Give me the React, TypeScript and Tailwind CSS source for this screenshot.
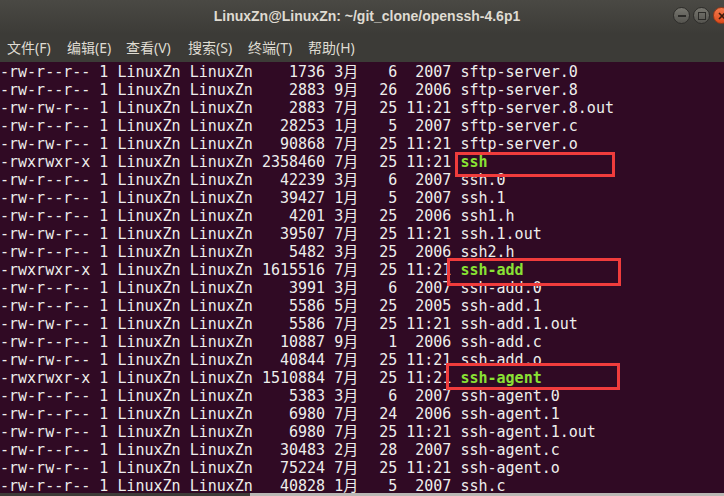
import React from "react";

type Row = [string, string, string, string, string, string, boolean?];

const rows: Row[] = [
  ["-rw-r--r--", "1736", "3月", "6", "2007", "sftp-server.0"],
  ["-rw-r--r--", "2883", "9月", "26", "2006", "sftp-server.8"],
  ["-rw-rw-r--", "2883", "7月", "25", "11:21", "sftp-server.8.out"],
  ["-rw-r--r--", "28253", "1月", "5", "2007", "sftp-server.c"],
  ["-rw-rw-r--", "90868", "7月", "25", "11:21", "sftp-server.o"],
  ["-rwxrwxr-x", "2358460", "7月", "25", "11:21", "ssh", true],
  ["-rw-r--r--", "42239", "3月", "6", "2007", "ssh.0"],
  ["-rw-r--r--", "39427", "1月", "5", "2007", "ssh.1"],
  ["-rw-r--r--", "4201", "3月", "25", "2006", "ssh1.h"],
  ["-rw-rw-r--", "39507", "7月", "25", "11:21", "ssh.1.out"],
  ["-rw-r--r--", "5482", "3月", "25", "2006", "ssh2.h"],
  ["-rwxrwxr-x", "1615516", "7月", "25", "11:21", "ssh-add", true],
  ["-rw-r--r--", "3991", "3月", "6", "2007", "ssh-add.0"],
  ["-rw-r--r--", "5586", "5月", "25", "2005", "ssh-add.1"],
  ["-rw-rw-r--", "5586", "7月", "25", "11:21", "ssh-add.1.out"],
  ["-rw-r--r--", "10887", "9月", "1", "2006", "ssh-add.c"],
  ["-rw-rw-r--", "40844", "7月", "25", "11:21", "ssh-add.o"],
  ["-rwxrwxr-x", "1510884", "7月", "25", "11:21", "ssh-agent", true],
  ["-rw-r--r--", "5383", "3月", "6", "2007", "ssh-agent.0"],
  ["-rw-r--r--", "6980", "7月", "24", "2006", "ssh-agent.1"],
  ["-rw-rw-r--", "6980", "7月", "25", "11:21", "ssh-agent.1.out"],
  ["-rw-r--r--", "30483", "2月", "28", "2007", "ssh-agent.c"],
  ["-rw-rw-r--", "75224", "7月", "25", "11:21", "ssh-agent.o"],
  ["-rw-r--r--", "40828", "1月", "5", "2007", "ssh.c"],
];

const menus: [string, string][] = [
  ["文件(F)", "w-[60px]"],
  ["编辑(E)", "w-[59px]"],
  ["查看(V)", "w-[62px]"],
  ["搜索(S)", "w-[60px]"],
  ["终端(T)", "w-[60px]"],
  ["帮助(H)", "w-[60px]"],
];

function WinButton({ kind }: { kind: "min" | "max" | "close" }) {
  const close = kind === "close";
  return (
    <div
      className={
        "flex h-[17px] w-[17px] items-center justify-center rounded-full border " +
        (close
          ? "border-[#9c3a18] bg-gradient-to-b from-[#f47a4c] to-[#de4a19]"
          : "border-[#2e2d2a] bg-gradient-to-b from-[#77766f] to-[#55544f]")
      }
    >
      {kind === "min" && <div className="h-[2px] w-[8px] bg-[#2b2a27]" />}
      {kind === "max" && <div className="h-[8px] w-[8px] border-[1.5px] border-[#2b2a27]" />}
      {close && (
        <svg width="8" height="8" viewBox="0 0 8 8">
          <path d="M1 1L7 7M7 1L1 7" stroke="#3a1a0c" strokeWidth="1.6" />
        </svg>
      )}
    </div>
  );
}

export default function App() {
  return (
    <div className="relative h-[496px] w-[724px] overflow-hidden bg-[#300a24]">
      <div className="relative flex h-[34px] items-center justify-center bg-gradient-to-b from-[#4a4944] to-[#3c3b37] pb-[2px] pl-[10px] font-['Liberation_Sans',sans-serif]">
        <span className="text-[14px] font-bold text-[#dfdbd2]">
          LinuxZn@LinuxZn: ~/git_clone/openssh-4.6p1
        </span>
        <div className="absolute right-[-6px] top-[7px] flex gap-[3px]">
          <WinButton kind="min" />
          <WinButton kind="max" />
          <WinButton kind="close" />
        </div>
      </div>

      <div className="flex h-[28px] items-center bg-[#3c3b37] pl-[7px] pb-[1px] font-['Noto_Sans','Noto_Sans_CJK_SC',sans-serif] text-[14px] text-[#dfdbd2]">
        {menus.map(([label, w]) => (
          <span key={label} className={w + " shrink-0 whitespace-nowrap"}>
            {label}
          </span>
        ))}
      </div>

      <div className="flex flex-col pt-[1px] font-['DejaVu_Sans_Mono','Noto_Sans_CJK_SC',monospace] text-[15px] leading-[18px] text-[#eeeeec]">
        {rows.map(([perm, size, month, day, time, name, exe]) => (
          <div key={name} className="flex h-[18px] whitespace-pre">
            <span>{`${perm} 1 LinuxZn LinuxZn ${size.padStart(7)} `}</span>
            <span className="w-[45px]">{month}</span>
            <span>{`${day.padStart(2)} ${time.padStart(5)} `}</span>
            <span className={exe ? "font-bold text-[#8ae234]" : ""}>{name}</span>
          </div>
        ))}
      </div>

      <div className="absolute bottom-0 left-0 flex h-[3px] w-full">
        <div className="w-[250px] bg-[#3c3b37]" />
        <div className="flex-1 bg-[#b9b8b4]" />
      </div>

      <div className="absolute left-[455px] top-[152px] h-[25px] w-[160px] border-[3px] border-[#f03c3c]" />
      <div className="absolute left-[447px] top-[258px] h-[28px] w-[174px] border-[3px] border-[#f03c3c]" />
      <div className="absolute left-[446px] top-[363px] h-[27px] w-[174px] border-[3px] border-[#f03c3c]" />
    </div>
  );
}
